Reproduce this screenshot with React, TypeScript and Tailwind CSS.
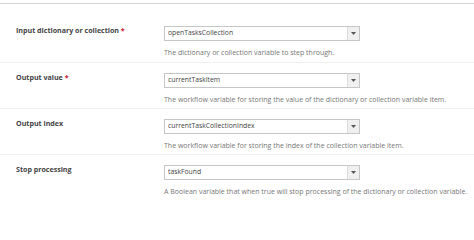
const FIELDS = [
  {
    label: "Input dictionary or collection",
    required: true,
    value: "openTasksCollection",
    help: "The dictionary or collection variable to step through.",
  },
  {
    label: "Output value",
    required: true,
    value: "currentTaskItem",
    help: "The workflow variable for storing the value of the dictionary or collection variable item.",
  },
  {
    label: "Output index",
    required: false,
    value: "currentTaskCollectionIndex",
    help: "The workflow variable for storing the index of the collection variable item.",
  },
  {
    label: "Stop processing",
    required: false,
    value: "taskFound",
    help: "A Boolean variable that when true will stop processing of the dictionary or collection variable.",
  },
];

function FakeSelect({ value }: { value: string }) {
  return (
    <div className="flex h-[15px] w-[196px] border border-[#c6c6c6] bg-white">
      <div className="flex flex-1 items-center pl-[3px] text-[6.8px] text-[#444]">{value}</div>
      <div className="flex w-[12px] items-center justify-center border-l border-[#dcdcdc] bg-[#f0f0f0]">
        <svg width="5" height="3" viewBox="0 0 5 3">
          <path d="M0 0h5L2.5 3z" fill="#555" />
        </svg>
      </div>
    </div>
  );
}

export default function App() {
  return (
    <div
      className="h-[209px] w-[474px] overflow-hidden bg-white pt-[3px]"
      style={{ fontFamily: '"Open Sans", "Liberation Sans", sans-serif' }}
    >
      <div className="h-px w-full bg-[#d4d4d4]" />
      <div className="pt-[12px]">
        {FIELDS.map((f, i) => (
          <div
            key={f.label}
            className={`flex h-[46px] pl-[8px] pt-[10px] ${i > 0 ? "border-t border-[#f0f0f0]" : ""}`}
          >
            <div className="w-[156px] pl-[8px] pt-[1px] text-[7.1px] font-bold leading-none text-[#444]">
              {f.label}
              {f.required && <span className="text-[#c8102e]"> *</span>}
            </div>
            <div>
              <FakeSelect value={f.value} />
              <p className="mt-[8px] text-[7px] leading-none text-[#777]">{f.help}</p>
            </div>
          </div>
        ))}
      </div>
    </div>
  );
}
